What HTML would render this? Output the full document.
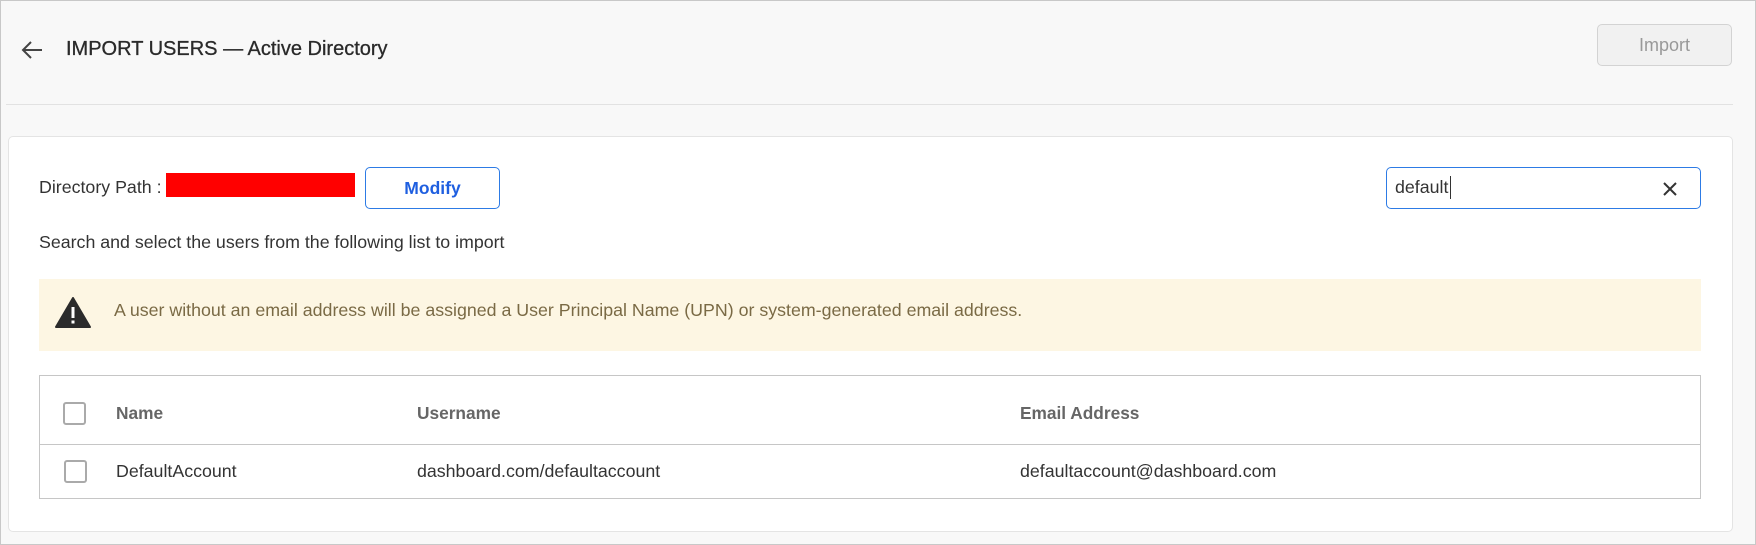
<!DOCTYPE html>
<html><head><style>
*{box-sizing:border-box;margin:0;padding:0}
body{width:1756px;height:545px;background:#f8f8f8;font-family:"Liberation Sans",sans-serif;color:#333;position:relative;overflow:hidden}
.outer{position:absolute;left:0;top:0;width:1756px;height:545px;border:1px solid #c8c8c8}
.abs{position:absolute;white-space:nowrap}
.title{left:66px;top:38px;font-size:20px;color:#2a2a2a;-webkit-text-stroke:0.3px #2a2a2a}
.sep{left:6px;top:104px;width:1727px;height:1px;background:#e2e2e2}
.imp{left:1597px;top:24px;width:135px;height:42px;border:1px solid #d3d3d3;border-radius:5px;background:#f1f1f1;color:#999;font-size:18px;text-align:center;line-height:40px}
.card{left:8px;top:136px;width:1725px;height:396px;background:#fff;border:1px solid #e4e4e4;border-radius:5px}
.t16{font-size:17.8px}
.mod{left:365px;top:167px;width:135px;height:42px;border:1px solid #2d7be5;border-radius:5px;color:#1f5fe0;font-size:17.5px;text-align:center;line-height:40px;font-weight:bold}
.srch{left:1386px;top:167px;width:315px;height:42px;border:1px solid #2d7be5;border-radius:5px}
.warn{left:39px;top:279px;width:1662px;height:72px;background:#fdf6e3}
.tbl{left:39px;top:375px;width:1662px;height:124px;border:1px solid #c6c6c6}
.cb{width:23px;height:23px;border:2px solid #aaa;border-radius:3px}
.hd{font-size:17.3px;color:#666;font-weight:bold}
</style></head><body>
<div class="outer"></div>
<svg class="abs" style="left:21px;top:40px" width="22" height="20" viewBox="0 0 22 20"><path d="M21 10H3M10 2L2 10 10 18" fill="none" stroke="#444" stroke-width="2"/></svg>
<div class="abs title">IMPORT USERS — Active Directory</div>
<div class="abs imp">Import</div>
<div class="abs sep"></div>
<div class="abs card"></div>
<div class="abs t16" style="left:39px;top:177px">Directory Path :</div>
<div class="abs" style="left:166px;top:173px;width:189px;height:24px;background:#f00"></div>
<div class="abs mod">Modify</div>
<div class="abs srch"></div>
<div class="abs t16" style="left:1395px;top:177px">default</div>
<div class="abs" style="left:1450px;top:176px;width:1px;height:23px;background:#333"></div>
<svg class="abs" style="left:1662px;top:181px" width="16" height="16" viewBox="0 0 16 16"><path d="M2 2L14 14M14 2L2 14" stroke="#333" stroke-width="2"/></svg>
<div class="abs t16" style="left:39px;top:232px">Search and select the users from the following list to import</div>
<div class="abs warn"></div>
<svg class="abs" style="left:54px;top:296px" width="38" height="33" viewBox="0 0 38 33"><path d="M19 2L36 31H2Z" fill="#2b2b2b" stroke="#2b2b2b" stroke-width="2" stroke-linejoin="round"/><rect x="17.5" y="11" width="3" height="11" fill="#fff"/><rect x="17.5" y="24.5" width="3" height="3" fill="#fff"/></svg>
<div class="abs t16" style="left:114px;top:300px;color:#7a6a45">A user without an email address will be assigned a User Principal Name (UPN) or system-generated email address.</div>
<div class="abs tbl"></div>
<div class="abs" style="left:40px;top:444px;width:1660px;height:1px;background:#c6c6c6"></div>
<div class="abs cb" style="left:63px;top:402px"></div>
<div class="abs cb" style="left:64px;top:460px"></div>
<div class="abs hd" style="left:116px;top:403px">Name</div>
<div class="abs hd" style="left:417px;top:403px">Username</div>
<div class="abs hd" style="left:1020px;top:403px">Email Address</div>
<div class="abs t16" style="left:116px;top:461px">DefaultAccount</div>
<div class="abs t16" style="left:417px;top:461px">dashboard.com/defaultaccount</div>
<div class="abs t16" style="left:1020px;top:461px">defaultaccount@dashboard.com</div>
</body></html>
